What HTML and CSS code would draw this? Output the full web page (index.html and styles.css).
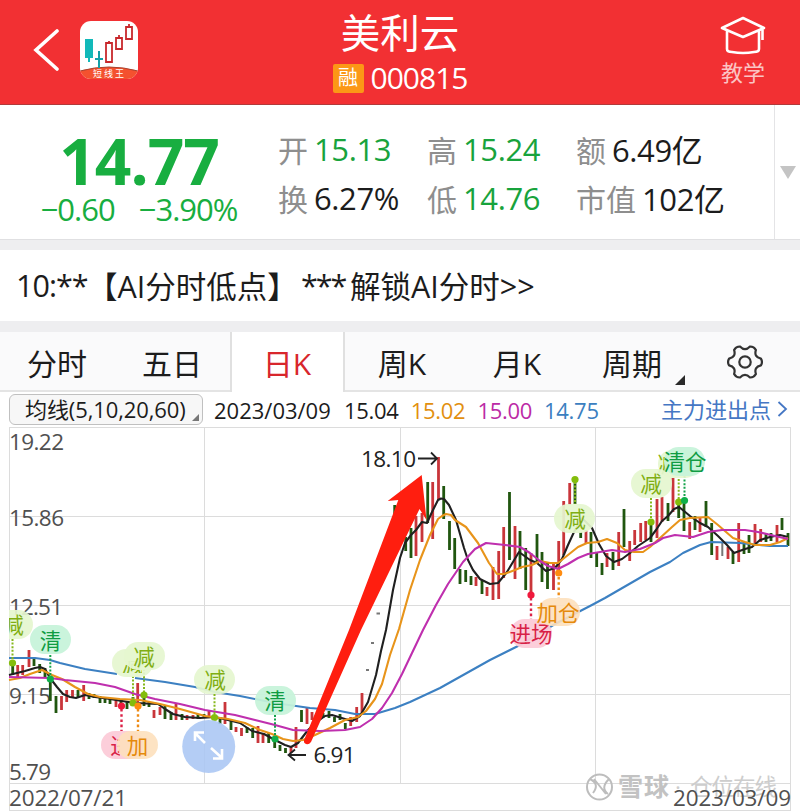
FILE: index.html
```html
<!DOCTYPE html>
<html lang="zh-CN">
<head>
    <meta charset="UTF-8">
    <meta name="viewport" content="width=device-width, initial-scale=1.0">
    <title>美利云 000815</title>
    <link rel="stylesheet" href="styles.css">
</head>
<body>
<header class="header">
    <div class="header-left">
        <svg class="back" width="26" height="42" viewBox="0 0 26 42"><path d="M24 2 L3 21 L24 40"/></svg>
        <svg class="app-logo" width="58" height="58" viewBox="0 0 58 58">
            <defs><clipPath id="logoClip"><rect width="58" height="58" rx="11"/></clipPath></defs>
            <g clip-path="url(#logoClip)">
                <rect width="58" height="58" fill="#fff"/>
                <path d="M0 50Q29 42 58 50V58H0Z" fill="#f4512f"/>
                <path d="M0 50Q29 42 58 50" fill="none" stroke="#a8422e"/>
                <path d="M5 18h8v19h-3v4h-2v-4H5z" fill="#12b9b9"/>
                <path d="M19 30V47M15 38H23" stroke="#12a0a8" stroke-width="2" fill="none"/>
                <path d="M26 22h6v19h-6zM29 20v2M36 17h6v11h-6zM39 14v3M46 6h6v12h-6zM49 3v3" stroke="#c8282c" stroke-width="1.8" fill="#fff"/>
            </g>
            <text x="29.5" y="55.5" text-anchor="middle" class="logo-text">短线王</text>
        </svg>
    </div>
    <div class="header-title">
        <h1>美利云</h1>
        <div class="code"><span class="badge">融</span><span class="code-num">000815</span></div>
    </div>
    <div class="header-right">
        <svg width="46" height="39" viewBox="0 0 46 39">
            <path d="M2 12 L23 2 L44 12 L23 21 Z M7 15 V33 Q7 36 12 36 Q23 38 34 36 Q39 36 39 33 V15 M42.500 13 V24"/>
        </svg>
        <span>教学</span>
    </div>
</header>

<section class="quote">
    <div class="price">
        <div class="price-now">14.77</div>
        <div class="price-change"><span>−0.60</span><span>−3.90%</span></div>
    </div>
    <div class="stats">
        <div><label>开</label><b class="down">15.13</b></div>
        <div><label>高</label><b class="down">15.24</b></div>
        <div><label>额</label><b>6.49亿</b></div>
        <div><label>换</label><b>6.27%</b></div>
        <div><label>低</label><b class="down">14.76</b></div>
        <div><label>市值</label><b>102亿</b></div>
    </div>
    <div class="more"><i></i></div>
</section>

<section class="notice"><span class="n1">10:**</span><span class="n2">【AI分时低点】</span><span class="n3">***</span><span class="n4">解锁AI分时&gt;&gt;</span></section>

<nav class="tabs">
    <a>分时</a>
    <a>五日</a>
    <a class="active">日K</a>
    <a>周K</a>
    <a>月K</a>
    <a class="cycle">周期</a>
    <a class="gear">
        <svg width="36" height="36" viewBox="0 0 36 36">
            <path d="M33.900 14.600Q36 18 33.900 21.400Q26.700 23 28.900 30.100Q27 33.600 23 33.500Q18 28.100 13 33.500Q9 33.600 7.100 30.100Q9.300 23 2.100 21.400Q0 18 2.100 14.600Q9.300 13 7.100 5.900Q9 2.400 13 2.500Q18 7.900 23 2.500Q27 2.400 28.900 5.900Q26.700 13 33.900 14.600Z"/>
            <circle cx="18" cy="18" r="5.700"/>
        </svg>
    </a>
</nav>

<div class="legend">
    <span class="ma-select">均线(5,10,20,60)</span>
    <span class="date">2023/03/09</span>
    <span class="ma5">15.04</span>
    <span class="ma10">15.02</span>
    <span class="ma20">15.00</span>
    <span class="ma60">14.75</span>
    <a class="link">主力进出点<svg width="11" height="18" viewBox="0 0 11 18"><path d="M1.500 2 L9 9 L1.500 16"/></svg></a>
</div>

<svg class="chart" width="800" height="385" viewBox="0 427 800 385">
    <defs>
        <clipPath id="plot"><rect x="9" y="427" width="782" height="385"/></clipPath>
        <clipPath id="cutIn"><rect x="100" y="730" width="20" height="30"/></clipPath>
        <clipPath id="cutReduce"><rect x="112" y="661" width="30" height="12"/></clipPath>
        <clipPath id="cutTop"><rect x="650" y="450" width="17" height="26"/></clipPath>
    </defs>

    <!-- grid -->
    <path class="grid" d="M9 427.500H791M9 516.500H791M9 605.500H791M9 694.500H791M9 783.500H791M9 810.500H791M9.500 427V811M204.500 427V783M400.500 427V783M595.500 427V783M790.500 427V811"/>

    <!-- axis labels -->
    <g class="axis">
        <text x="9" y="450" textLength="55">19.22</text>
        <text x="9" y="526" textLength="55">15.86</text>
        <text x="9" y="615" textLength="54">12.51</text>
        <text x="9" y="704" textLength="42">9.15</text>
        <text x="9" y="780" textLength="42">5.79</text>
        <text x="9" y="806" textLength="118">2022/07/21</text>
    </g>

    <!-- candles -->
    <path class="up" d="M17.700 665V677M22.700 665V675M29 650V667M61.500 696V710M66.700 690V702M72.500 690V698M83.700 685V701M116 699V707M137.700 683V702M154 710V718M160 707V715M176 704V720M187 715V720M193 715V719M209 710V718M225 702V724M236 727V732M241.500 728V736M258 726V743M263 733V743M291 747V753M296 727V748M307 708V724M312 712V720M350.700 717V726M356.700 707V722M362 693V713
        M416 516V556M422 513V542M432.700 482V539M438.500 457V500M476 577V586M487 587V596M493 567V600M498.700 551V599M503.700 527V578M515 526V579M531 553V593M553.500 562V590M558.700 541V573M563.700 501V555M569.700 483V505M586 530V543M607 553V567M618.700 532V566M629.700 541V561M634.700 530V545M640.700 523V542M645.700 521V540
        M657 499V538M662 497V522M673 478V512M689.700 522V539M700 518V532M717 546V560M728 547V559M738.700 523V562M755 524V543M760.700 529V542M777 525V542"/>
    <path class="dn" d="M12.700 662V675M34 658V666M39.700 664V673M45 668V677M50.300 678V701M56 696V713M78 690V697M89 693V699M94 694V698M100 696V703M105 697V703M110 698V704M121 700V706M127 701V709M133 697V706M144 697V706M149 702V707M165 706V719M171 712V720M182 714V720M198 714V719M204 714V718M220 717V724M231 719V730M247 727V733M252.700 728V738M268.700 733V743M274.700 738V748M280 745V751M285.500 748V753M301.500 710V722M323 713V718M329 711V718M334.500 717V722M340 714V720M345.300 723V729
        M394.700 505V517M405.700 537V551M411 528V558M427.700 482V523M443.700 486V519M449.500 521V550M454.700 538V569M460 569V584M465.700 570V582M471 576V585M482 580V594M509.500 492V560M520 531V569M525.700 548V590M537 534V563M542 552V582M547.500 562V589M575 480V504M580.700 532V538M591 532V558M596.700 553V567M602 563V575M613 552V570M624 509V547
        M651 525V542M668 503V521M678.700 503V518M684 503V531M695 516V530M706 501V527M711.700 523V555M733 552V564M744 542V554M749 535V553M766 533V542M771 533V541M782 518V530M788 533V546"/>
    <path class="flat" d="M722.300 542V556M366 670H369M371 643H374M376.500 613.500H380"/>

    <!-- moving averages -->
    <polyline class="line ma60-line" points="9,658 35,658 50,660 60,663 85,669 117,674"/>
    <polyline class="line ma60-line" points="135,678 165,682 195,687 215,692 240,696 275,703 310,708 335,710 355,714 375,714 395,708 410,702 440,688 465,674 490,660 520,645 555,624 590,606 605,598 650,572 670,562 683,553 700,545 711,542 740,543 770,546 788,546"/>
    <polyline class="line ma5-line" points="9,675 25,671 35,668 40,667 45,669 50,678 57,687 63,694 70,697 76,698 85,695 95,697 110,699 122,701 135,703 158,704 165,709 173,714 185,717 200,718 215,717 228,720 240,723 252,731 264,734 275,740 285,745 291,747 298,743 308,730 318,721 325,716 332,715 345,719 352,721 360,716 368,702 376,675 381,651 386,630 393,590 400,558 405,543 411,535 416,530 422,522 427,523 432,512 438,500 441,498.500 444,499 449,505 456,520 464,548 468,560 473,570 480,579 490,584 498,583 507,572 519,552 530,560 537,563 546,571 555,568 562,559 568,545 574,532 582,518 592,528 599,544 606,556 614,562 622,559 630,553 638,546 650,538 656,530 662,521 668,516 674,509 679,507 684,511 690,516 700,523 708,527 718,536 727,545 734,553 745,549 752,547 760,540 770,537 780,535 788,537"/>
    <polyline class="line ma10-line" points="9,680 20,678 30,674 42,670 52,675 62,679 75,687 88,694 100,697 120,699 140,700 160,704 180,709 205,716 228,719 245,723 260,730 272,734 283,739 293,741 303,740 315,735 330,728 345,720 358,717 366,711 375,699 382,684 390,655 399,629 410,590 420,560 430,535 438,519 442,516 446,514 451,515 455,520 466,527 478,543 489,563 497,574 504,574 515,570 522,567 532,565 540,561 550,563 558,563 568,555 578,547 587,543 598,542 607,539 617,543 625,550 634,552 643,552 650,547 660,538 672,527 680,520 690,518 708,517 718,525 733,538 745,542 755,545 770,545 780,542 788,538"/>
    <polyline class="line ma20-line" points="9,677 50,678 65,680 95,683 115,687 135,694 155,699 180,704 205,710 235,715 255,720 275,725 293,730 320,731 345,730 360,727 372,719 382,708 392,693 402,674 412,653 423,630 436,605 448,584 463,562 475,549 486,543 505,545 520,547 530,553 540,561 548,566 558,569 568,564 578,558 588,554 600,552 612,550 625,552 640,549 655,543 663,538 675,535 693,537 708,532 722,530 745,530 758,532 775,536 788,539"/>

    <!-- signal stems and dots -->
    <path class="stem" stroke="#86b81c" d="M12.500 639V662M133 676V703M144 669V695M214.500 694V715M575 482V504M651 498V520M678.700 479V500"/>
    <path class="stem" stroke="#13a24a" d="M50.300 655V675M275 715V736M684.500 476V498"/>
    <path class="stem bold" stroke="#dc2348" d="M121.500 709V731M531 598V619"/>
    <path class="stem bold" stroke="#ee8a14" d="M138 709V731M558.700 577V598"/>
    <g fill="#84bd0c">
        <circle cx="12.500" cy="663" r="3.600"/><circle cx="133" cy="703" r="3.600"/><circle cx="144" cy="695" r="3.600"/><circle cx="214.500" cy="717.500" r="3.600"/>
        <circle cx="575" cy="479.500" r="3.600"/><circle cx="651" cy="522" r="3.600"/><circle cx="678.700" cy="502" r="3.600"/>
    </g>
    <g fill="#0fb04a"><circle cx="50.300" cy="679" r="3.600"/><circle cx="275" cy="739" r="3.600"/><circle cx="684.500" cy="500.500" r="3.600"/></g>
    <g fill="#f0193c"><circle cx="121.500" cy="706" r="3.600"/><circle cx="531" cy="595" r="3.600"/></g>
    <g fill="#ff8c10"><circle cx="138" cy="706" r="3.600"/><circle cx="558.700" cy="573" r="3.600"/></g>

    <!-- signal labels -->
    <g class="tag" clip-path="url(#plot)">
        <rect class="t-reduce" x="-8" y="610" width="41" height="29" rx="14.500"/><text class="c-reduce" x="13" y="632.500">减</text>
        <rect class="t-clear" x="30" y="625" width="41" height="29" rx="14.500"/><text class="c-clear" x="50.500" y="648.500">清</text>
        <rect class="t-reduce" x="112" y="649" width="41" height="28" rx="14"/><text class="c-reduce" x="133" y="672" clip-path="url(#cutReduce)">减</text>
        <rect class="t-reduce" x="124" y="642" width="41" height="28" rx="14"/><text class="c-reduce" x="144" y="664.500">减</text>
        <rect class="t-reduce" x="194" y="665" width="41" height="29" rx="14.500"/><text class="c-reduce" x="215" y="687.500">减</text>
        <rect class="t-clear" x="255" y="686" width="41" height="29" rx="14.500"/><text class="c-clear" x="275" y="708.500">清</text>
        <rect class="t-in" x="101" y="731" width="43" height="28" rx="14"/><text class="c-in" x="121" y="753.500" clip-path="url(#cutIn)">进</text>
        <rect class="t-add" x="117" y="731" width="41" height="28" rx="14"/><text class="c-add" x="137.500" y="753.500">加</text>
        <rect class="t-reduce" x="554" y="504" width="41" height="29" rx="14.500"/><text class="c-reduce" x="575" y="526.500">减</text>
        <rect class="t-in" x="510" y="619" width="42" height="29" rx="14.500"/><text class="c-in" x="531" y="642">进场</text>
        <rect class="t-add" x="538" y="598" width="42" height="28" rx="14"/><text class="c-add" x="558" y="620.500">加仓</text>
        <rect class="t-reduce" x="658" y="450" width="41" height="28" rx="14"/><text class="c-reduce" x="668" y="471.500" clip-path="url(#cutTop)">减</text>
        <rect class="t-reduce" x="631" y="469" width="41" height="29" rx="14.500"/><text class="c-reduce" x="651" y="491.500">减</text>
        <rect class="t-clear" x="664" y="447" width="41" height="29" rx="14.500"/><text class="c-clear" x="685" y="469.500">清仓</text>
    </g>

    <!-- high / low marks -->
    <g class="mark">
        <text x="361" y="467" textLength="55">18.10</text>
        <path d="M418 458.500H437M431 452.500L437 458.500L431 464.500"/>
        <text x="313.500" y="763" textLength="42">6.91</text>
        <path d="M306 755H289M295 749.500L288.500 755L295 760.500"/>
    </g>

    <!-- expand button -->
    <circle cx="208.700" cy="746.500" r="26.500" fill="#aac6f4" fill-opacity=".88"/>
    <path d="M205 743L195.500 733.500M195 741V732.500H204M211 748L221.500 757.500M213 758.500H222V749" fill="none" stroke="#fff" stroke-width="2.600"/>

    <!-- watermark -->
    <g class="watermark">
        <circle cx="599.500" cy="787" r="12.500"/>
        <path d="M590 779Q600 784 593 793M609 779Q600 788 608 794M594 779L606 794"/>
        <text x="618" y="796" textLength="51" class="wm-strong">雪球</text>
        <text x="675" y="795">·</text>
        <text x="690" y="795" textLength="87">仓位在线</text>
    </g>
    <text class="axis-end" x="673" y="806" textLength="118">2023/03/09</text>

    <!-- trend arrow -->
    <path d="M304.300 739.500L349 630L398.300 500L387.700 501L421.700 475L426.500 520L419.500 509L361 630L311 742Q308 746 304.500 743Q303.500 741.500 304.300 739.500Z" fill="#ff1e0f"/>
</svg>
</body>
</html>
```

FILE: styles.css
```css
* {
    box-sizing: border-box;
}
body {
    margin: 0;
    width: 800px;
    height: 812px;
    overflow: hidden;
    background-color: #fff;
    color: #1c1c1c;
    font-family: "Open Sans", "Noto Sans CJK SC", sans-serif;
}
svg {
    display: block;
    flex: none;
}

/* header */
.header {
    display: grid;
    grid-template-columns: 200px 1fr 200px;
    height: 105px;
    background-color: #f23033;
    border-bottom: 1px solid #b23a3a;
    color: #fff;
}
.header-left {
    display: flex;
    padding: 21px 0 0 33px;
}
.back {
    margin: 8px 21px 0 0;
}
.back path {
    fill: none;
    stroke: #fff;
    stroke-width: 3.6;
    stroke-linecap: round;
}
.logo-text {
    font-size: 9px;
    letter-spacing: 2px;
    fill: #fff;
}
.header-title {
    display: flex;
    flex-direction: column;
    align-items: center;
}
.header-title h1 {
    margin: 12px 0 0;
    font-size: 39.5px;
    line-height: 42px;
    font-weight: 400;
}
.code {
    display: flex;
    align-items: center;
    margin-top: 9px;
    height: 30px;
}
.badge {
    width: 31px;
    height: 29px;
    margin-right: 7px;
    border-radius: 2px;
    background-color: #fc9716;
    font-size: 20px;
    line-height: 28px;
    text-align: center;
}
.code-num {
    font-size: 30px;
    letter-spacing: -1px;
    line-height: 30px;
}
.header-right {
    display: flex;
    flex-direction: column;
    align-items: center;
    padding: 16px 0 0 86px;
}
.header-right path {
    fill: none;
    stroke: #fff;
    stroke-width: 2.6;
    stroke-linejoin: round;
}
.header-right span {
    margin-top: 3px;
    font-size: 22px;
    line-height: 28px;
    color: #fbc4c4;
}

/* quote */
.quote {
    display: flex;
    height: 135px;
    border-bottom: 1px solid #e0e0e2;
}
.price {
    width: 278px;
    padding-top: 24px;
    color: #18ae40;
    text-align: center;
}
.price-now {
    font-size: 64px;
    line-height: 64px;
    font-weight: 700;
    letter-spacing: -1px;
}
.price-change {
    display: flex;
    justify-content: center;
    gap: 24px;
    font-size: 31px;
    line-height: 32px;
    letter-spacing: -1px;
}
.stats {
    display: grid;
    grid-template-columns: 149px 149px 1fr;
    grid-template-rows: 49px 49px;
    width: 496px;
    padding-top: 19px;
}
.stats div {
    display: flex;
    align-items: center;
    gap: 6px;
    white-space: nowrap;
}
.stats label {
    font-size: 30px;
    color: #8e8e8e;
}
.stats b {
    font-size: 31px;
    font-weight: 400;
    letter-spacing: -0.4px;
}
.stats .down {
    color: #18a33c;
}
.more {
    flex: 1;
    display: flex;
    align-items: center;
    justify-content: flex-end;
    padding-right: 4px;
    border-left: 1px solid #e4e4e6;
}
.more i {
    border: 8px solid transparent;
    border-top: 13px solid #c4c4c4;
    border-bottom: 0;
}

/* notice */
.notice {
    display: flex;
    align-items: center;
    height: 92px;
    padding: 0 0 2px 16px;
    border-top: 10px solid #eeeef0;
    border-bottom: 11px solid #eeeef0;
    font-size: 30.5px;
    white-space: nowrap;
}
.n1 {
    width: 71px;
    letter-spacing: -1px;
}
.n2 {
    width: 214px;
}
.n3 {
    width: 49px;
    letter-spacing: -2px;
}

/* tabs */
.tabs {
    display: flex;
    height: 60px;
    background-color: #fafafb;
}
.tabs a {
    display: flex;
    align-items: center;
    justify-content: center;
    width: 115px;
    border-bottom: 2px solid #e4e4e4;
    font-size: 30px;
    padding: 2px 1px 0 0;
}
.tabs .active {
    background-color: #fff;
    border: 1px solid #e0e0e0;
    border-width: 0 2px;
    padding-bottom: 2px;
    color: #d8262c;
}
.cycle {
    position: relative;
}
.cycle::after {
    content: "";
    position: absolute;
    right: 5px;
    bottom: 5px;
    border-left: 10px solid transparent;
    border-bottom: 10px solid #2a2a2a;
}
.tabs .gear {
    width: 110px;
}
.gear path, .gear circle {
    fill: none;
    stroke: #333;
    stroke-width: 2.2;
}

/* legend */
.legend {
    display: flex;
    align-items: center;
    height: 35px;
    padding: 0 12px 0 9px;
    font-size: 22px;
    white-space: nowrap;
}
.ma-select {
    position: relative;
    width: 194px;
    height: 31px;
    margin-right: 11px;
    padding-left: 15px;
    border: 1px solid #c0c0c0;
    border-radius: 6px;
    background-color: #f7f7f7;
    line-height: 28px;
    letter-spacing: -0.1px;
}
.ma-select::after {
    content: "";
    position: absolute;
    right: 3px;
    bottom: 3px;
    border-left: 7px solid transparent;
    border-bottom: 7px solid #777;
}
.date {
    width: 130px;
}
.ma5, .ma10, .ma20, .ma60 {
    width: 66.7px;
    letter-spacing: -0.3px;
}
.ma10 {
    color: #e2900f;
}
.ma20 {
    color: #bc2ba6;
}
.ma60 {
    color: #3b80c0;
}
.link {
    display: flex;
    align-items: center;
    gap: 6px;
    margin-left: auto;
    line-height: 30px;
    padding-bottom: 2px;
    color: #4577c4;
}
.link path {
    fill: none;
    stroke: #4577c4;
    stroke-width: 1.8;
}

/* chart */
.grid {
    fill: none;
    stroke: #dcdcdc;
}
.chart text {
    font-size: 22.5px;
}
.axis text, .chart .axis-end {
    fill: #505050;
}
.up, .dn, .flat {
    fill: none;
    stroke-width: 2.8;
}
.up {
    stroke: #c9353a;
}
.dn {
    stroke: #20560f;
}
.flat {
    stroke: #777;
    stroke-width: 2;
}
.line {
    fill: none;
    stroke-width: 2.1;
    stroke-linejoin: round;
}
.ma5-line {
    stroke: #202020;
}
.ma10-line {
    stroke: #e8941a;
}
.ma20-line {
    stroke: #bf2fae;
}
.ma60-line {
    stroke: #3c80c2;
}
.stem {
    fill: none;
    stroke-width: 2;
    stroke-dasharray: 2 1.6;
}
.stem.bold {
    stroke-width: 2.4;
    stroke-dasharray: 2.6 2.6;
}
.chart .tag text {
    font-size: 21.5px;
    text-anchor: middle;
}
.t-reduce {
    fill: #e5f6d0;
    fill-opacity: 0.93;
}
.t-clear {
    fill: #c6f3d9;
    fill-opacity: 0.93;
}
.t-in {
    fill: #fccbd8;
    fill-opacity: 0.95;
}
.t-add {
    fill: #fde0bc;
    fill-opacity: 0.9;
}
.c-reduce {
    fill: #80ae12;
}
.c-clear {
    fill: #109c43;
}
.c-in {
    fill: #d81f47;
}
.c-add {
    fill: #e58a0c;
}
.mark path {
    fill: none;
    stroke: #222;
    stroke-width: 1.8;
}
.mark text {
    fill: #222;
}
.watermark circle, .watermark path {
    fill: none;
    stroke: #bdbdbd;
    stroke-width: 2;
}
.watermark text {
    fill: #cdcdcd;
}
.chart .wm-strong {
    font-size: 25px;
    font-weight: 700;
    fill: #c2c2c2;
}
```
